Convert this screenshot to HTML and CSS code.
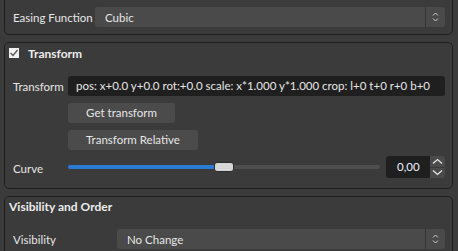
FILE: index.html
```html
<!DOCTYPE html>
<html lang="en">
<head>
    <meta charset="UTF-8">
    <title>Move Transition</title>
    <link rel="stylesheet" href="styles.css">
</head>
<body>
    <div class="panel">
        <!-- easing -->
        <div class="group group_top">
            <div class="row row_easing">
                <label>Easing Function</label>
                <div class="combo">
                    <span>Cubic</span>
                    <span class="combo_arrow">
                        <svg width="7" height="12" viewBox="0 0 7 12"><path d="M1 4.5 L3.5 2 L6 4.5 M1 7.5 L3.5 10 L6 7.5" fill="none" stroke="#cfcfcf" stroke-width="1"/></svg>
                    </span>
                </div>
            </div>
        </div>

        <!-- transform -->
        <div class="group">
            <div class="group_title">
                <span class="check">
                    <svg width="10" height="10" viewBox="0 0 10 10"><path d="M1.5 5 L4 7.5 L8.5 2" fill="none" stroke="#555" stroke-width="1.3"/></svg>
                </span>
                <span>Transform</span>
            </div>
            <div class="form">
                <label>Transform</label>
                <div class="text_field">pos: x+0.0 y+0.0 rot:+0.0 scale: x*1.000 y*1.000 crop: l+0 t+0 r+0 b+0</div>
                <span></span>
                <div><a class="btn btn_get">Get transform</a></div>
                <span></span>
                <div><a class="btn btn_rel">Transform Relative</a></div>
                <label class="curve_label">Curve</label>
                <div class="curve">
                    <div class="slider">
                        <div class="slider_fill" style="width: 146px"></div>
                        <div class="slider_handle"></div>
                        <div class="slider_rest"></div>
                    </div>
                    <div class="spin">
                        <span class="spin_value">0,00</span>
                        <span class="spin_btns">
                            <span class="spin_btn"><svg width="11" height="7" viewBox="0 0 11 7"><path d="M1 5.5 L5.5 1.5 L10 5.5" fill="none" stroke="#e8e8e8" stroke-width="1.2"/></svg></span>
                            <span class="spin_btn"><svg width="11" height="7" viewBox="0 0 11 7"><path d="M1 1.5 L5.5 5.5 L10 1.5" fill="none" stroke="#e8e8e8" stroke-width="1.2"/></svg></span>
                        </span>
                    </div>
                </div>
            </div>
        </div>

        <!-- visibility -->
        <div class="group group_last">
            <div class="group_title group_title_plain">Visibility and Order</div>
            <div class="row row_vis">
                <label>Visibility</label>
                <div class="combo">
                    <span>No Change</span>
                    <span class="combo_arrow">
                        <svg width="7" height="12" viewBox="0 0 7 12"><path d="M1 4.5 L3.5 2 L6 4.5 M1 7.5 L3.5 10 L6 7.5" fill="none" stroke="#cfcfcf" stroke-width="1"/></svg>
                    </span>
                </div>
            </div>
        </div>
    </div>
</body>
</html>
```

FILE: styles.css
```css
html{
    font-family: Lato, "Liberation Sans", sans-serif;
    font-size: 11.5px;
}
body{margin: 0;padding: 0;background: #3b3b3b;color: #e6e6e6;overflow: hidden;}
label{display: block;white-space: nowrap;}
.panel{
    padding: 0 5px 0 4px;
}
.group{
    border: 1px solid #1e1e1e;
    border-radius: 5px;
    margin-bottom: 7px;
}
.group_top{
    margin-top: -8px;
    padding: 14px 0 7px;
}
.row{
    display: flex;
    align-items: center;
    padding: 0 7px 0 8px;
    height: 20px;
}
.row_easing label{width: 82px;}
.row_vis label{width: 104px;}
.combo{
    flex: 1;
    display: flex;
    align-items: center;
    height: 20px;
    background: #4a4a4a;
    border-radius: 3px;
    padding-left: 10px;
}
.combo span:first-child{flex: 1;}
.combo_arrow{
    width: 19px;
    height: 20px;
    border-left: 1px solid #343434;
    display: flex;
    align-items: center;
    justify-content: center;
}
.combo_arrow svg{display: block;}
.group_title{
    display: flex;
    align-items: center;
    height: 20px;
    padding: 0 0 0 4px;
    font-weight: bold;
    font-size: 12px;
    color: #ececec;
}
.group_title_plain{
    padding-left: 4px;
    height: 19px;
    margin-bottom: 13px;
}
.check{
    width: 10px;
    height: 10px;
    background: #f2f2f2;
    margin-right: 9px;
}
.check svg{display: block;}
.form{
    display: grid;
    grid-template-columns: 55px 1fr;
    row-gap: 7px;
    align-items: center;
    padding: 13px 7px 10px 8px;
}
.text_field{
    height: 20px;
    line-height: 20px;
    background: #1f1f1f;
    border-radius: 3px;
    padding-left: 8px;
    white-space: nowrap;
    overflow: hidden;
}
.btn{
    display: inline-block;
    height: 20px;
    line-height: 20px;
    background: #4b4b4b;
    border-radius: 3px;
    text-align: center;
}
.btn_get{width: 107px;}
.btn_rel{width: 130px;}
.curve_label{margin-top: 1px;}
.curve{
    display: flex;
    align-items: center;
    margin-top: -1px;
}
.slider{
    flex: 1;
    display: flex;
    align-items: center;
    height: 10px;
}
.slider_fill{
    height: 4px;
    background: #2b7bd5;
    border-radius: 2px 0 0 2px;
}
.slider_handle{
    width: 18px;
    height: 8px;
    background: #d6d6d6;
    border: 1px solid #2a2a2a;
    border-radius: 3px;
}
.slider_rest{
    flex: 1;
    height: 4px;
    background: #4e4e4e;
    border-radius: 0 2px 2px 0;
}
.spin{
    display: flex;
    margin-left: 6px;
    height: 22px;
    width: 59px;
}
.spin_value{
    flex: 1;
    background: #1f1f1f;
    border-radius: 3px 0 0 3px;
    line-height: 22px;
    padding-left: 11px;
    color: #eef2ff;
}
.spin_btns{
    display: flex;
    flex-direction: column;
    width: 15px;
    background: #4a4a4a;
    border-radius: 0 3px 3px 0;
}
.spin_btn{
    flex: 1;
    display: flex;
    align-items: center;
    justify-content: center;
}
.spin_btn + .spin_btn{border-top: 1px solid #3a3a3a;}
.spin_btn svg{display: block;}
.group_last{
    height: 80px;
    margin-bottom: 0;
}
```
